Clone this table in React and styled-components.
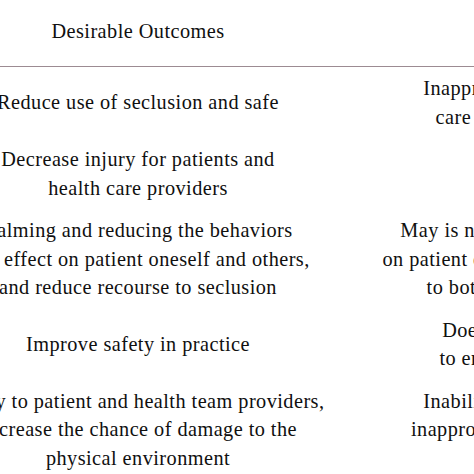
import React from 'react'
import styled, { createGlobalStyle } from 'styled-components'

const GlobalStyle = createGlobalStyle`
    html, body {
        margin: 0;
        padding: 0;
        background: #ffffff;
    }
`

// page is a crop of a wider table: columns run past both edges
const Viewport = styled.div`
    width: 474px;
    height: 474px;
    overflow: hidden;
    background: #ffffff;
    color: #101010;
    font-family: "Liberation Serif", "Times New Roman", serif;
    font-size: 20.3px;
    letter-spacing: 0.45px;
    line-height: 28.5px;
`

const Table = styled.div`
    width: 762px;
    margin-left: -32px;
`

const Row = styled.div`
    display: grid;
    grid-template-columns: 340px 340px;
    column-gap: 82px;
    align-items: center;
    padding: ${p => p.$head ? '17px 0 20.5px' : '7px 0'};
    border-bottom: ${p => p.$head ? '1.5px solid #9c8b92' : 'none'};
`

const Cell = styled.div`
    display: flex;
    flex-direction: column;
    align-items: center;
    text-align: center;
    white-space: nowrap;
`

const Line = styled.span`
    display: block;
`

const rows = [
    {
        good: ['Reduce use of seclusion and safe'],
        bad: ['Inappropriate uses by the health', 'care providers in the hospital'],
    },
    {
        good: ['Decrease injury for patients and', 'health care providers'],
        bad: [],
    },
    {
        good: [
            'Calming and reducing the behaviors',
            'that effect on patient oneself and others,',
            'and reduce recourse to seclusion',
        ],
        bad: [
            'May is not effective and has negative',
            'on patient oneself and others, and it leads',
            'to both the patient and the staff',
        ],
    },
    {
        good: ['Improve safety in practice'],
        bad: ['Does not inspire the patient', 'to engage in treatment plans'],
    },
    {
        good: [
            'Safety to patient and health team providers,',
            'decrease the chance of damage to the',
            'physical environment',
        ],
        bad: [
            'Inability to calm the patient and',
            'inappropriate use of seclusion may',
            'lead to harm',
        ],
    },
]

function TableCell({ lines }) {
    return (
        <Cell>
            {lines.map((t, i) => <Line key={i}>{t}</Line>)}
        </Cell>
    )
}

export default function App() {
    return (
        <>
            <GlobalStyle />
            <Viewport>
                <Table>
                    <Row $head>
                        <TableCell lines={['Desirable Outcomes']} />
                        <Cell />
                    </Row>
                    {rows.map((r, i) => (
                        <Row key={i}>
                            <TableCell lines={r.good} />
                            <TableCell lines={r.bad} />
                        </Row>
                    ))}
                </Table>
            </Viewport>
        </>
    )
}
